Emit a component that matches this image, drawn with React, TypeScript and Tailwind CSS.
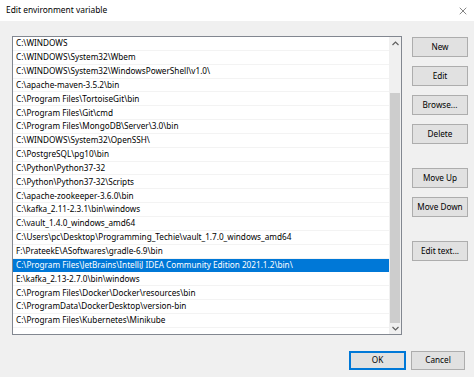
import { X } from "lucide-react";

const paths = [
  "C:\\WINDOWS",
  "C:\\WINDOWS\\System32\\Wbem",
  "C:\\WINDOWS\\System32\\WindowsPowerShell\\v1.0\\",
  "C:\\apache-maven-3.5.2\\bin",
  "C:\\Program Files\\TortoiseGit\\bin",
  "C:\\Program Files\\Git\\cmd",
  "C:\\Program Files\\MongoDB\\Server\\3.0\\bin",
  "C:\\WINDOWS\\System32\\OpenSSH\\",
  "C:\\PostgreSQL\\pg10\\bin",
  "C:\\Python\\Python37-32",
  "C:\\Python\\Python37-32\\Scripts",
  "C:\\apache-zookeeper-3.6.0\\bin",
  "C:\\kafka_2.11-2.3.1\\bin\\windows",
  "C:\\vault_1.4.0_windows_amd64",
  "C:\\Users\\pc\\Desktop\\Programming_Techie\\vault_1.7.0_windows_amd64",
  "F:\\PrateekE\\ASoftwares\\gradle-6.9\\bin",
  "C:\\Program Files\\JetBrains\\IntelliJ IDEA Community Edition 2021.1.2\\bin\\",
  "E:\\kafka_2.13-2.7.0\\bin\\windows",
  "C:\\Program Files\\Docker\\Docker\\resources\\bin",
  "C:\\ProgramData\\DockerDesktop\\version-bin",
  "C:\\Program Files\\Kubernetes\\Minikube",
];

const selected = 16;

const SideButton = ({ label }: { label: string }) => (
  <div className="h-[20px] w-[56px] flex items-center justify-center bg-[#e1e1e1] border border-[#adadad] whitespace-nowrap">
    {label}
  </div>
);

const App = () => {
  return (
    <div className="w-[474px] h-[379px] bg-white flex flex-col font-['Segoe_UI','Noto_Sans',sans-serif] text-[8.2px] text-black overflow-hidden">
      <div className="h-[21px] flex items-center justify-between pl-[6px] pr-[5px] text-[8.4px]">
        <span>Edit environment variable</span>
        <X size={12} strokeWidth={1.2} className="text-[#333]" />
      </div>

      <div className="h-[356px] bg-[#f0f0f0] flex flex-col pl-[12px] pt-[15px]">
        <div className="flex gap-[10px]">
          <div className="w-[390px] h-[299px] border border-[#828790] bg-white flex">
            <div className="flex-1 flex flex-col">
              {paths.map((p, i) => (
                <div
                  key={p}
                  className={`h-[13.85px] flex items-center pl-[3px] whitespace-nowrap overflow-hidden leading-none ${
                    i === selected
                      ? "bg-[#0078d7] text-white"
                      : "border-b border-[#f3f3f3]"
                  }`}
                >
                  {p}
                </div>
              ))}
            </div>
            <div className="w-[12px] bg-[#f0f0f0] flex flex-col">
              <div className="h-[13px] flex items-center justify-center">
                <svg width="7" height="5" viewBox="0 0 7 5">
                  <path d="M0.5 4 L3.5 1 L6.5 4" fill="none" stroke="#606060" strokeWidth="1.2" />
                </svg>
              </div>
              <div className="h-[43px]" />
              <div className="h-[230px] mx-[1px] bg-[#cdcdcd]" />
              <div className="flex-1 flex items-center justify-center">
                <svg width="7" height="5" viewBox="0 0 7 5">
                  <path d="M0.5 1 L3.5 4 L6.5 1" fill="none" stroke="#606060" strokeWidth="1.2" />
                </svg>
              </div>
            </div>
          </div>

          <div className="flex flex-col pt-[1px]">
            <SideButton label="New" />
            <div className="h-[9px]" />
            <SideButton label="Edit" />
            <div className="h-[9px]" />
            <SideButton label="Browse..." />
            <div className="h-[9px]" />
            <SideButton label="Delete" />
            <div className="h-[24px]" />
            <SideButton label="Move Up" />
            <div className="h-[9px]" />
            <SideButton label="Move Down" />
            <div className="h-[24px]" />
            <SideButton label="Edit text..." />
          </div>
        </div>

        <div className="flex justify-end gap-[5px] pr-[9px] mt-[16px]">
          <div className="h-[19px] w-[57px] flex items-center justify-center bg-[#e1e1e1] border-2 border-[#0078d7]">
            OK
          </div>
          <div className="h-[19px] w-[54px] flex items-center justify-center bg-[#e1e1e1] border border-[#adadad]">
            Cancel
          </div>
        </div>
      </div>
    </div>
  );
};

export default App;
